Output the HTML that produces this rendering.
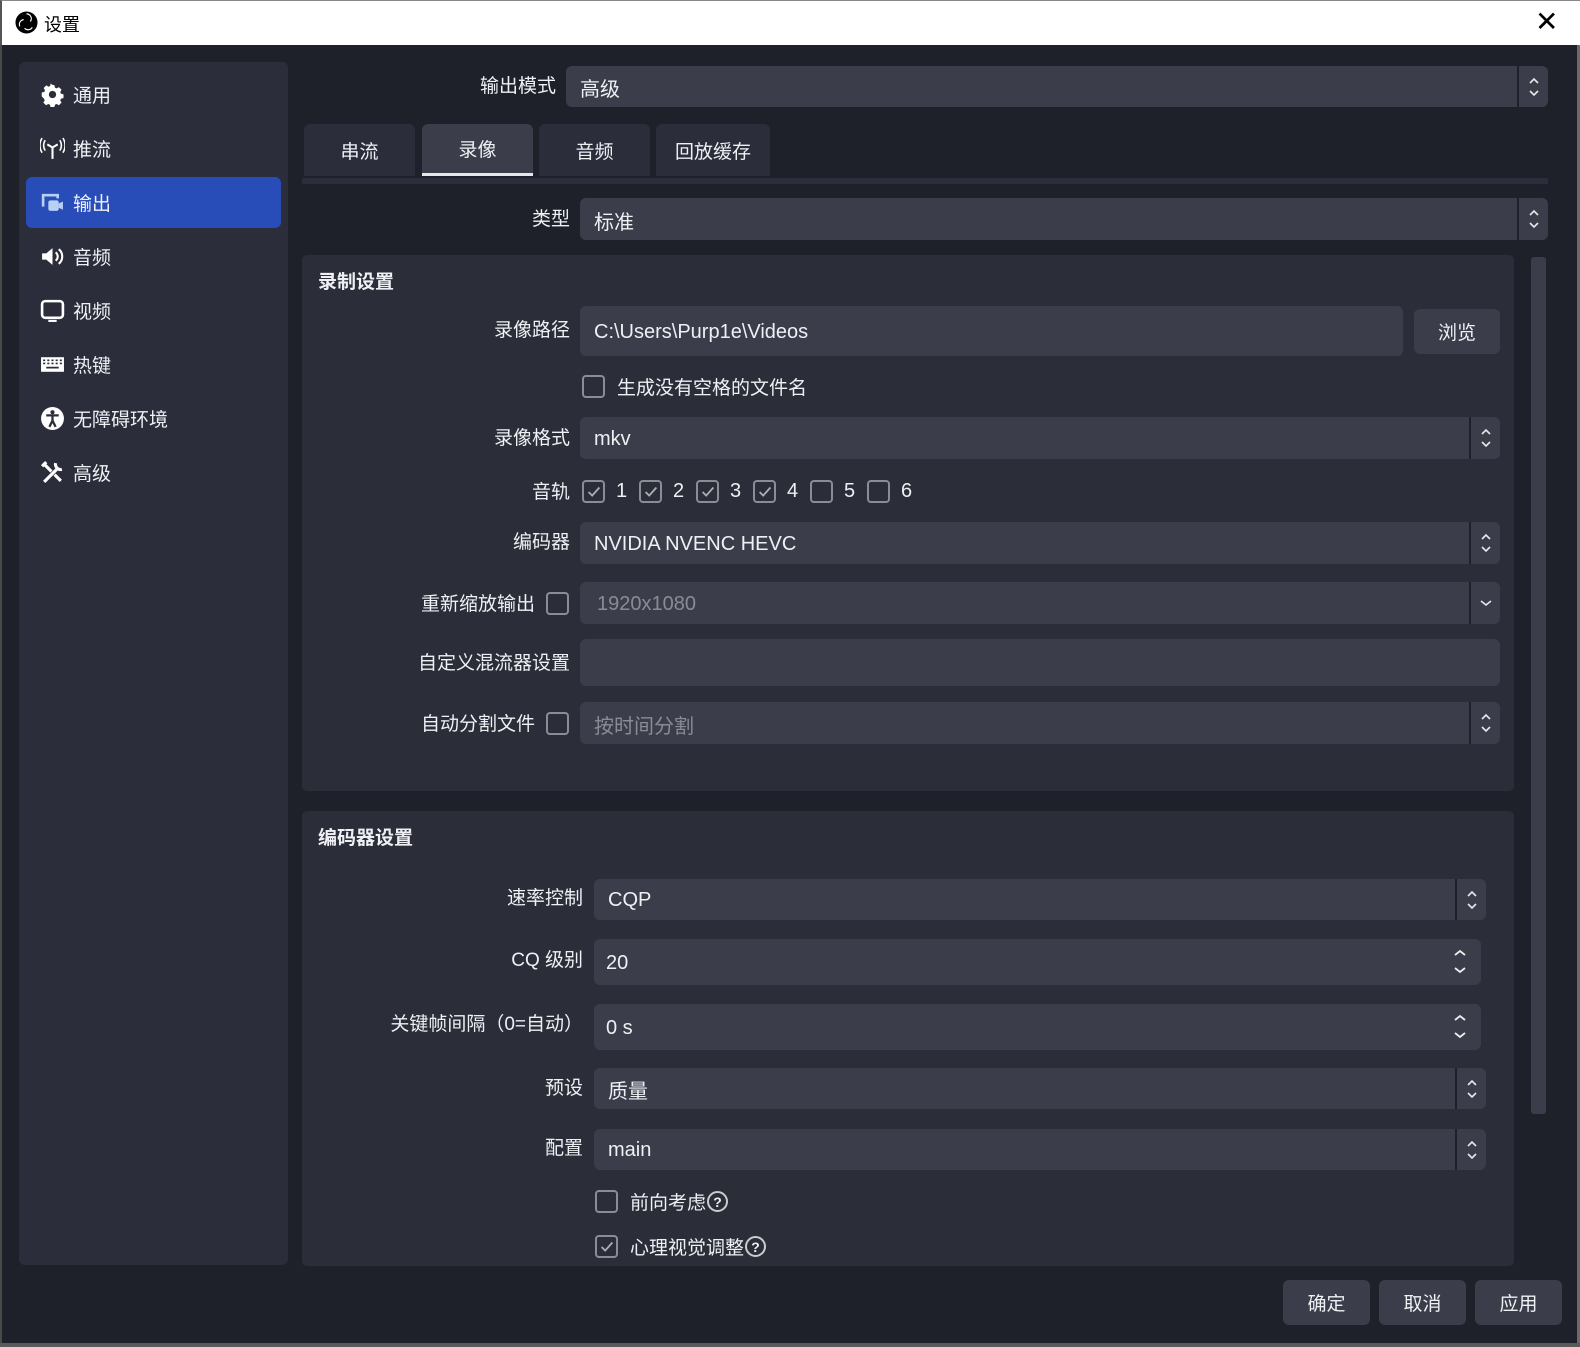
<!DOCTYPE html>
<html><head><meta charset="utf-8"><style>
*{box-sizing:border-box;margin:0;padding:0}
body{width:1580px;height:1347px;background:#1f212a;font-family:"Liberation Sans","Noto Sans CJK SC",sans-serif;color:#eef0f4;font-size:19px;position:relative;overflow:hidden}
.a{position:absolute}
.title{left:0;top:0;width:1580px;height:45px;background:#fff;color:#000;border-left:2px solid #555;border-top:1px solid #888}
.side{left:19px;top:62px;width:269px;height:1203px;background:#2b2d3a;border-radius:6px}
.item{left:26px;width:255px;height:51px;border-radius:6px;display:flex;align-items:center;padding-left:14px}
.item svg{width:25px;height:25px;margin-right:8px}
.sel{background:#284db9}
.box{background:#3b3e4a;border-radius:6px;display:flex;align-items:center;padding-left:14px;font-size:20px;padding-top:2px}
.arr{position:absolute;right:0;top:0;bottom:0;width:31px;border-left:2px solid #1f212a;display:flex;align-items:center;justify-content:center}
.panel{background:#2b2d38;border-radius:5px}
.lab{text-align:right;white-space:nowrap;margin-top:-3px}
.cb{width:23px;height:23px;border:2px solid #8a8d96;border-radius:4px;display:flex;align-items:center;justify-content:center}
.tab{top:124px;height:52px;background:#2b2d3a;border-radius:6px 6px 0 0;display:flex;align-items:center;justify-content:center}
.btn{top:1280px;width:87px;height:45px;background:#3b3e4a;border-radius:6px;display:flex;align-items:center;justify-content:center}
.dim{color:#8a8c94}
.q{display:inline-flex;align-items:center;justify-content:center;width:21px;height:21px;border:2px solid #ccc;border-radius:50%;font-size:14px;font-weight:bold;vertical-align:-3px;margin-left:1px}
.n{font-size:20px}
</style></head><body>
<svg width="0" height="0" style="position:absolute"><defs>
<symbol id="ud" viewBox="0 0 12 24"><path d="M2 8l4-4 4 4M2 16l4 4 4-4" stroke="#e8e8e8" stroke-width="1.6" fill="none"/></symbol>
<symbol id="ck" viewBox="0 0 20 20"><path d="M4 10l4 4 8-9" stroke="#aeb0b6" stroke-width="2" fill="none"/></symbol>
</defs></svg>

<div class="a title">
 <svg class="a" style="left:13px;top:10px" width="23" height="23" viewBox="0 0 24 24"><circle cx="12" cy="12" r="11.5" fill="#000"/><path d="M12 3a5 5 0 0 1 4 8M5 16a5 5 0 0 1 4-7M18 17a5 5 0 0 1-8 1" stroke="#fff" stroke-width="1.2" fill="none"/></svg>
 <div class="a" style="left:42px;top:10px;font-size:18px">设置</div>
 <div class="a" style="left:1533px;top:4px;font-size:28px;font-weight:300">✕</div>
</div>
<div class="a" style="left:1577px;top:45px;width:3px;height:1302px;background:#6a6a6a"></div>
<div class="a" style="left:0;top:45px;width:2px;height:1302px;background:#4a4a4a"></div>
<div class="a" style="left:0;top:1343px;width:1580px;height:4px;background:#5a5a5a"></div>

<div class="a side"></div>
<div class="a item" style="top:69px"><svg viewBox="0 0 24 24"><path d="M12 2l2 .3.6 2.6 1.8.8 2.3-1.4 2.8 2.8-1.4 2.3.8 1.8 2.6.6v4l-2.6.6-.8 1.8 1.4 2.3-2.8 2.8-2.3-1.4-1.8.8-.6 2.6h-4l-.6-2.6-1.8-.8-2.3 1.4-2.8-2.8 1.4-2.3-.8-1.8L.8 14v-4l2.6-.6.8-1.8-1.4-2.3 2.8-2.8 2.3 1.4 1.8-.8L10 .5z" fill="#fff" transform="scale(.92) translate(1 1)"/><circle cx="12" cy="12" r="3.5" fill="#2b2d3a"/></svg>通用</div>
<div class="a item" style="top:123px"><svg viewBox="0 0 24 24" fill="none" stroke="#fff" stroke-width="2"><path d="M12 10v12M7 8l5 3 5-3"/><path d="M5 4a9 9 0 0 0 0 10M19 4a9 9 0 0 1 0 10M2 2a13 13 0 0 0 0 14M22 2a13 13 0 0 1 0 14" stroke-width="1.5"/></svg>推流</div>
<div class="a item sel" style="top:177px"><svg viewBox="0 0 24 24"><path d="M3 16V5h14v3" stroke="#b9d0f5" stroke-width="2.5" fill="none"/><rect x="8" y="10" width="10" height="10" rx="2" fill="#b9d0f5"/><path d="M18 13l4-2v8l-4-2z" fill="#b9d0f5"/></svg>输出</div>
<div class="a item" style="top:231px"><svg viewBox="0 0 24 24"><path d="M2 9h4l6-5v16l-6-5H2z" fill="#fff"/><path d="M15 8a5 5 0 0 1 0 8M18 5a9 9 0 0 1 0 14" stroke="#fff" stroke-width="2" fill="none"/></svg>音频</div>
<div class="a item" style="top:285px"><svg viewBox="0 0 24 24"><rect x="2" y="3" width="20" height="16" rx="3" stroke="#fff" stroke-width="2.5" fill="none"/><path d="M8 22h8" stroke="#fff" stroke-width="2"/></svg>视频</div>
<div class="a item" style="top:339px"><svg viewBox="0 0 24 24"><rect x="1" y="5" width="22" height="14" fill="#fff"/><path d="M3 8h2M7 8h2M11 8h2M15 8h2M19 8h2M3 11h2M7 11h2M11 11h2M15 11h2M19 11h2M6 15h12" stroke="#2b2d3a" stroke-width="1.6"/></svg>热键</div>
<div class="a item" style="top:393px"><svg viewBox="0 0 24 24"><circle cx="12" cy="12" r="11" fill="#fff"/><circle cx="12" cy="6" r="2" fill="#2b2d3a"/><path d="M6 9h12M12 9v5l-3 6M12 14l3 6" stroke="#2b2d3a" stroke-width="2.2" fill="none"/></svg>无障碍环境</div>
<div class="a item" style="top:447px"><svg viewBox="0 0 24 24" fill="none" stroke="#fff" stroke-width="3"><path d="M4 21L17 8"/><path d="M15 3a5 5 0 0 0 6 6" stroke-width="3"/><path d="M3 3l8 8M14 14l6 6"/><path d="M2 6l4-4"/></svg>高级</div>

<div class="a lab" style="right:1024px;top:74px">输出模式</div>
<div class="a box" style="left:566px;top:66px;width:982px;height:41px">高级<div class="arr"><svg width="12" height="24"><use href="#ud"/></svg></div></div>

<div class="a tab" style="left:304px;width:111px">串流</div>
<div class="a tab" style="left:422px;width:111px;background:#3b3e4a;border-bottom:3px solid #e8e8e8">录像</div>
<div class="a tab" style="left:539px;width:111px">音频</div>
<div class="a tab" style="left:656px;width:114px">回放缓存</div>
<div class="a" style="left:302px;top:178px;width:1246px;height:6px;background:#2b2d3a"></div>

<div class="a lab" style="right:1010px;top:207px">类型</div>
<div class="a box" style="left:580px;top:198px;width:968px;height:42px">标准<div class="arr"><svg width="12" height="24"><use href="#ud"/></svg></div></div>

<div class="a panel" style="left:302px;top:255px;width:1212px;height:536px"></div>
<div class="a" style="left:1531px;top:257px;width:15px;height:857px;background:#3b3e4a;border-radius:3px"></div>
<div class="a" style="left:318px;top:267px;font-weight:bold">录制设置</div>

<div class="a lab" style="right:1010px;top:318px">录像路径</div>
<div class="a box" style="left:580px;top:306px;width:823px;height:50px">C:\Users\Purp1e\Videos</div>
<div class="a btn" style="left:1414px;top:309px;width:86px;height:45px">浏览</div>

<div class="a cb" style="left:582px;top:375px"></div>
<div class="a" style="left:617px;top:373px">生成没有空格的文件名</div>

<div class="a lab" style="right:1010px;top:426px">录像格式</div>
<div class="a box" style="left:580px;top:417px;width:920px;height:42px">mkv<div class="arr"><svg width="12" height="24"><use href="#ud"/></svg></div></div>

<div class="a lab" style="right:1010px;top:480px">音轨</div>
<div class="a cb" style="left:582px;top:480px"><svg width="18" height="18" viewBox="0 0 20 20"><use href="#ck"/></svg></div><div class="a n" style="left:616px;top:480px">1</div>
<div class="a cb" style="left:639px;top:480px"><svg width="18" height="18" viewBox="0 0 20 20"><use href="#ck"/></svg></div><div class="a n" style="left:673px;top:480px">2</div>
<div class="a cb" style="left:696px;top:480px"><svg width="18" height="18" viewBox="0 0 20 20"><use href="#ck"/></svg></div><div class="a n" style="left:730px;top:480px">3</div>
<div class="a cb" style="left:753px;top:480px"><svg width="18" height="18" viewBox="0 0 20 20"><use href="#ck"/></svg></div><div class="a n" style="left:787px;top:480px">4</div>
<div class="a cb" style="left:810px;top:480px"></div><div class="a n" style="left:844px;top:480px">5</div>
<div class="a cb" style="left:867px;top:480px"></div><div class="a n" style="left:901px;top:480px">6</div>

<div class="a lab" style="right:1010px;top:530px">编码器</div>
<div class="a box" style="left:580px;top:522px;width:920px;height:42px">NVIDIA NVENC HEVC<div class="arr"><svg width="12" height="24"><use href="#ud"/></svg></div></div>

<div class="a lab" style="right:1045px;top:592px">重新缩放输出</div>
<div class="a cb" style="left:546px;top:592px"></div>
<div class="a box dim" style="left:580px;top:582px;width:920px;height:42px;padding-left:17px">1920x1080<div class="arr"><svg width="14" height="10"><path d="M2 3l5 4 5-4" stroke="#e8e8e8" stroke-width="1.6" fill="none"/></svg></div></div>

<div class="a lab" style="right:1010px;top:651px">自定义混流器设置</div>
<div class="a box" style="left:580px;top:639px;width:920px;height:47px"></div>

<div class="a lab" style="right:1045px;top:712px">自动分割文件</div>
<div class="a cb" style="left:546px;top:712px"></div>
<div class="a box dim" style="left:580px;top:702px;width:920px;height:42px">按时间分割<div class="arr"><svg width="12" height="24"><use href="#ud"/></svg></div></div>

<div class="a panel" style="left:302px;top:811px;width:1212px;height:455px"></div>
<div class="a" style="left:318px;top:823px;font-weight:bold">编码器设置</div>

<div class="a lab" style="right:997px;top:886px">速率控制</div>
<div class="a box" style="left:594px;top:879px;width:892px;height:41px">CQP<div class="arr"><svg width="12" height="24"><use href="#ud"/></svg></div></div>

<div class="a lab" style="right:997px;top:948px">CQ 级别</div>
<div class="a box" style="left:594px;top:939px;width:887px;height:46px;padding-left:12px">20<svg class="a" style="right:14px;top:9px" width="14" height="28" viewBox="0 0 14 28"><path d="M2 7l5-4 5 4M2 20l5 4 5-4" stroke="#eee" stroke-width="1.8" fill="none"/></svg></div>

<div class="a lab" style="right:997px;top:1012px">关键帧间隔（0=自动）</div>
<div class="a box" style="left:594px;top:1004px;width:887px;height:46px;padding-left:12px">0 s<svg class="a" style="right:14px;top:9px" width="14" height="28" viewBox="0 0 14 28"><path d="M2 7l5-4 5 4M2 20l5 4 5-4" stroke="#eee" stroke-width="1.8" fill="none"/></svg></div>

<div class="a lab" style="right:997px;top:1076px">预设</div>
<div class="a box" style="left:594px;top:1068px;width:892px;height:41px">质量<div class="arr"><svg width="12" height="24"><use href="#ud"/></svg></div></div>

<div class="a lab" style="right:997px;top:1136px">配置</div>
<div class="a box" style="left:594px;top:1129px;width:892px;height:41px">main<div class="arr"><svg width="12" height="24"><use href="#ud"/></svg></div></div>

<div class="a cb" style="left:595px;top:1190px"></div>
<div class="a" style="left:630px;top:1188px;display:flex;align-items:center">前向考虑<span class="q">?</span></div>
<div class="a cb" style="left:595px;top:1235px"><svg width="18" height="18" viewBox="0 0 20 20"><use href="#ck"/></svg></div>
<div class="a" style="left:630px;top:1233px;display:flex;align-items:center">心理视觉调整<span class="q">?</span></div>

<div class="a btn" style="left:1283px">确定</div>
<div class="a btn" style="left:1379px">取消</div>
<div class="a btn" style="left:1475px">应用</div>
</body></html>
